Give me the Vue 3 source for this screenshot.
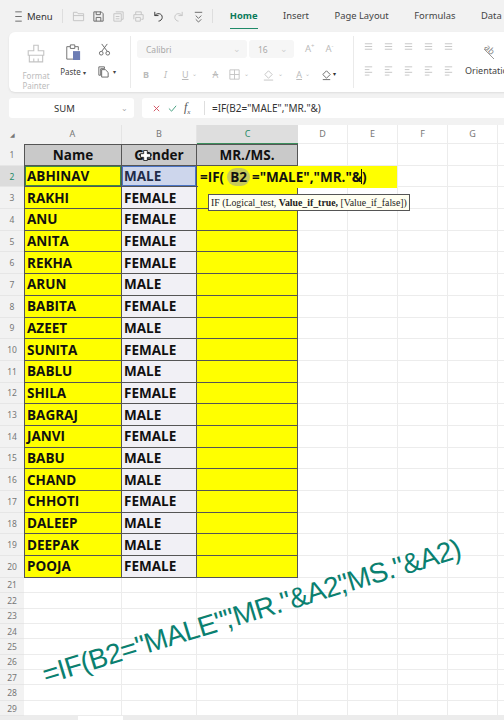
<script setup>
const people = [
  ['ABHINAV','MALE'],['RAKHI','FEMALE'],['ANU','FEMALE'],['ANITA','FEMALE'],['REKHA','FEMALE'],
  ['ARUN','MALE'],['BABITA','FEMALE'],['AZEET','MALE'],['SUNITA','FEMALE'],['BABLU','MALE'],
  ['SHILA','FEMALE'],['BAGRAJ','MALE'],['JANVI','FEMALE'],['BABU','MALE'],['CHAND','MALE'],
  ['CHHOTI','FEMALE'],['DALEEP','MALE'],['DEEPAK','MALE'],['POOJA','FEMALE']
]
const emptyRows = [21,22,23,24,25,26,27,28,29]
const emptyCols = ['D','E','F','G','']
const alignA = [0,1,2,3,4]
</script>

<template>
  <div class="app">
    <header class="topbar">
      <svg class="ic menu-ic" viewBox="0 0 9 14"><path d="M1 2h7M1 7h7M1 12h7"/></svg>
      <span class="menu">Menu</span>
      <i class="sep"></i>
      <svg class="ic faint" viewBox="0 0 14 14"><path d="M1.500 11.500v-9h4l1 1.500h6v7.500zM1.500 6h11"/></svg>
      <svg class="ic" viewBox="0 0 14 14"><path d="M2 2h8l2 2v8H2zM4.500 2v3h4.500V2M4.500 12V8h5v4"/></svg>
      <svg class="ic faint" viewBox="0 0 14 14"><path d="M4 2h8v8h-2M2 4h8v8H2zM4 7h4M4 9.500h4"/></svg>
      <svg class="ic faint" viewBox="0 0 14 14"><path d="M4 5V2h6v3M2 10V5h10v5h-2M4 8h5v4H4z"/></svg>
      <svg class="ic dark" viewBox="0 0 14 14"><path d="M3 2v4h4M3 6c2-3 8-3 8 2 0 2-2 4-4 4"/></svg>
      <svg class="ic faint" viewBox="0 0 14 14"><path d="M11 2v4H7M11 6C9 3 3 3 3 8c0 2 2 4 4 4"/></svg>
      <svg class="ic" viewBox="0 0 14 14"><path d="M3 2.500h8M4 6l3 3 3-3M4 10l3 3 3-3"/></svg>
      <i class="sep"></i>
      <nav class="tabs">
        <span class="tab active">Home</span>
        <span class="tab">Insert</span>
        <span class="tab">Page Layout</span>
        <span class="tab">Formulas</span>
        <span class="tab">Data</span>
      </nav>
    </header>

    <section class="ribbon">
      <div class="group clip">
        <div class="tool format">
          <svg class="ic big faint" viewBox="0 0 18 18"><path d="M7 2h4v5h5v4H2V7h5zM3 11v6h12v-6M7 17v-3M11 17v-3"/></svg>
          <span>Format<br>Painter</span>
        </div>
        <div class="tool paste">
          <svg class="paste-ic" viewBox="0 0 18 20"><path class="line" d="M2 18V4h4V2h5v2h4v4M6 4v2h5V4M2 18h7"/><rect x="9" y="9" width="8" height="10" fill="#6d7db4"/></svg>
          <span>Paste <small>▾</small></span>
        </div>
        <div class="tool pair">
          <svg class="ic cut" viewBox="0 0 14 14"><path d="M4 1l6 8M10 1L4 9"/><circle cx="3.500" cy="11" r="2"/><circle cx="10.500" cy="11" r="2"/></svg>
          <span class="copy">
            <svg class="ic" viewBox="0 0 14 14"><path d="M2 2h6v2h-4v7H2zM5 5h4l3 3v5H5z"/></svg>
            <small>▾</small>
          </span>
        </div>
      </div>
      <div class="group font">
        <div class="line-a">
          <span class="select calibri">Calibri<b>⌄</b></span>
          <span class="select size">16<b>⌄</b></span>
          <span class="fade a-big">A<sup>+</sup></span>
          <span class="fade a-big">A<sup>-</sup></span>
        </div>
        <div class="line-b">
          <span class="fade sty bold">B</span>
          <span class="fade sty ital">I</span>
          <span class="fade sty under">U</span>
          <small class="fade wide">⌄</small>
          <span class="fade sty strike">A</span>
          <svg class="ic faint" viewBox="0 0 14 14"><path d="M2 2h10v10H2zM7 2v10M2 7h10"/></svg>
          <small class="fade wide">⌄</small>
          <svg class="ic faint" viewBox="0 0 14 14"><path d="M3 7l4-4 4 4-4 4zM2 13h10"/></svg>
          <small class="fade wide">⌄</small>
          <span class="fade sty under">A</span>
          <small class="fade wide last">⌄</small>
          <svg class="ic" viewBox="0 0 14 14"><path d="M3 7l4-4 4 4-4 4zM3 12.500h8"/></svg>
          <small>▾</small>
        </div>
      </div>
      <div class="group align">
        <div class="line-c">
          <svg v-for="n in alignA" :key="n" class="ic faint small" viewBox="0 0 12 12"><path d="M2 3h8M2 6h8M2 9h8"/></svg>
        </div>
        <div class="line-c">
          <svg v-for="n in alignA" :key="n" class="ic faint small" viewBox="0 0 12 12"><path d="M2 2h8M2 5h5M2 8h8M2 11h5"/></svg>
        </div>
      </div>
      <div class="tool orient">
        <svg class="orient-ic" viewBox="0 0 20 20"><text x="3" y="13" transform="rotate(45 9 10)">ab</text><path d="M3 9l10 10"/></svg>
        <span>Orientation</span>
      </div>
    </section>

    <section class="formula">
      <div class="namebox"><span>SUM</span><b>⌄</b></div>
      <div class="fx">
        <svg class="mark" viewBox="0 0 10 10"><path stroke="#d0495a" d="M2 2l6 6M8 2L2 8"/></svg>
        <svg class="mark" viewBox="0 0 10 10"><path stroke="#3a9a78" d="M1 5l3 3 5-6"/></svg>
        <em>f<sub>x</sub></em>
        <i class="sep"></i>
        <span class="input">=IF(B2="MALE","MR."&amp;)</span>
      </div>
    </section>

    <main class="sheet">
      <div class="cols">
        <span class="corner">◢</span>
        <span class="col a">A</span>
        <span class="col b">B</span>
        <span class="col c">C</span>
        <span v-for="c in emptyCols" :key="c" class="col plain">{{ c }}</span>
      </div>

      <div class="row tall">
        <span class="rh">1</span>
        <span class="cell head a">Name</span>
        <span class="cell head b cursor-cell">Gender<svg class="cursor" viewBox="0 0 12 12"><path d="M4 0.500h4v3.500h3.500v4H8v3.500H4V8H0.500V4H4z"/></svg></span>
        <span class="cell head c">MR./MS.</span>
        <span v-for="c in emptyCols" :key="c" class="cell plain"></span>
      </div>

      <div v-for="(p, i) in people" :key="p[0]" class="row tall">
        <span class="rh" :class="{ current: i === 0 }">{{ i + 2 }}</span>
        <span class="cell name a">{{ p[0] }}</span>
        <span class="cell gender b" :class="{ picked: i === 0 }">{{ p[1] }}</span>
        <span class="cell yellow c"></span>
        <span v-for="c in emptyCols" :key="c" class="cell plain"></span>
      </div>

      <div v-for="r in emptyRows" :key="r" class="row short">
        <span class="rh">{{ r }}</span>
        <span class="cell plain a"></span>
        <span class="cell plain b"></span>
        <span class="cell plain c"></span>
        <span v-for="c in emptyCols" :key="c" class="cell plain"></span>
      </div>

      <div class="edit">=IF(<span class="ref">B2</span>="MALE","MR."&amp;<i class="caret"></i>)</div>
      <div class="tip"><span>IF (Logical_test, <b>Value_if_true,</b> [Value_if_false])</span></div>
      <div class="note">=IF(B2="MALE"<span class="tight">,</span>"MR."&amp;A2<span class="tight">,</span>"MS."&amp;A2)</div>
    </main>

    <footer class="sheetbar"><span class="sheettab"></span></footer>
  </div>
</template>

<style>
html, body { margin: 0; background: #f3f3f3; }
</style>

<style scoped>
.app { width: 504px; height: 720px; overflow: hidden; background: #f2f2f2; display: flex; flex-direction: column; font-family: "Noto Sans", "Open Sans", sans-serif; color: #333; }

.ic { width: 13px; height: 13px; fill: none; stroke: #666; stroke-width: 1; flex: none; }
.ic.faint { stroke: #c4c4c4; }
.ic.dark { stroke: #333; }
.ic.big { width: 20px; height: 20px; }
.ic.small { width: 11px; height: 11px; }
.sep { display: block; width: 1px; height: 14px; background: #dedede; flex: none; }

.topbar { height: 32px; flex: none; display: flex; align-items: center; padding-left: 14px; white-space: nowrap; overflow: hidden; }
.menu { font-size: 9.500px; margin-right: 9px; color: #333; }
.topbar .sep { margin-right: 9px; }
.topbar .ic { margin-right: 7px; }
.topbar .menu-ic { width: 9px; margin-right: 4px; }
.tabs { display: flex; margin-left: 8px; gap: 25.500px; font-size: 9.400px; color: #444; }
.tab { position: relative; line-height: 14px; }
.tab.active { color: #0a7a5a; font-weight: 700; }
.tab.active::after { content: ""; position: absolute; left: 0; right: 0; bottom: -6px; height: 1px; background: #1f8a68; }

.ribbon { height: 60px; flex: none; margin-left: 9px; width: 520px; box-sizing: border-box; background: #fff; border-radius: 6px 0 0 6px; display: flex; box-shadow: 0 1px 2px #ddd; white-space: nowrap; overflow: hidden; }
.group { display: flex; }
.clip { width: 122px; padding-left: 12px; box-sizing: border-box; border-right: 1px solid #eaeaea; margin: 4px 0; gap: 8px; flex: none; }
.tool { display: flex; flex-direction: column; align-items: center; font-size: 8px; color: #444; }
.format { color: #bbb; width: 30px; text-align: center; gap: 8px; line-height: 10px; padding-top: 7px; }
.paste { width: 28px; gap: 5px; padding-top: 7px; }
.paste-ic { width: 16px; height: 18px; fill: none; }
.paste-ic .line { stroke: #666; }
.paste small { font-size: 6px; }
.pair { gap: 9px; padding-top: 7px; margin-left: 2px; }
.copy { display: flex; align-items: center; gap: 3px; margin-right: -5px; }
.copy small { font-size: 6px; }

.font { width: 223px; flex-direction: column; padding: 4px 0 0 6px; gap: 6px; box-sizing: border-box; border-right: 1px solid #eaeaea; margin: 4px 0; flex: none; }
.line-a, .line-b { display: flex; align-items: center; }
.select { height: 18px; background: #f6f6f6; border-radius: 3px; font-size: 8.500px; color: #a8a8a8; display: flex; align-items: center; justify-content: space-between; padding: 0 6px 0 9px; box-sizing: border-box; }
.select b { font-weight: 400; color: #d0d0d0; line-height: 8px; }
.calibri { width: 110px; margin-right: 2px; }
.size { width: 45px; }
.fade { color: #bbb; }
.a-big { font-size: 9.500px; margin-left: 11px; }
.a-big sup { font-size: 6px; }
.line-b { font-size: 9px; padding-left: 6px; height: 20px; }
.line-b small { font-size: 6px; }
.line-b .wide { margin: 0 13px 0 3px; }
.line-b .wide.last { margin-right: 10px; }
.sty { margin-right: 15px; }
.sty.under { margin-right: 0; }
.strike { margin: 0 10px 0 3px; }
.bold { font-weight: 700; }
.ital { font-style: italic; }
.under { text-decoration: underline; }
.strike { text-decoration: line-through; }

.align { width: 106px; flex: none; flex-direction: column; padding: 9px 0 0 9px; gap: 13px; box-sizing: border-box; }
.line-c { display: flex; gap: 9px; }
.orient { padding-top: 8px; gap: 4px; font-size: 9px; align-items: flex-start; margin-left: 5px; }
.orient-ic { width: 20px; height: 20px; margin-left: 16px; fill: #888; stroke: #999; }
.orient-ic text { font-size: 9px; stroke: none; font-family: "Noto Sans", sans-serif; }

.formula { height: 20px; margin-top: 6px; flex: none; display: flex; padding-left: 9px; gap: 8px; }
.namebox { width: 125px; background: #fff; border-radius: 3px; display: flex; align-items: center; justify-content: space-between; padding: 0 6px 0 45px; box-sizing: border-box; font-size: 9.500px; }
.namebox b { font-weight: 400; color: #aaa; font-size: 8px; line-height: 6px; }
.fx { flex: 1; background: #fff; border-radius: 3px 0 0 3px; display: flex; align-items: center; padding-left: 10px; gap: 7px; font-size: 10px; white-space: nowrap; }
.mark { width: 9px; height: 9px; fill: none; stroke-width: 1; }
.fx em { font-family: "Liberation Serif", serif; font-size: 12px; width: 13px; color: #555; }
.fx sub { font-size: 7px; }

.sheet { position: relative; flex: 1; margin-top: 7px; background: #fff; overflow: hidden; }
.cols { height: 19px; display: flex; background: #f2f2f2; font-size: 9px; color: #777; }
.corner { width: 24px; flex: none; text-align: center; font-size: 6px; line-height: 20px; color: #777; }
.col { display: flex; flex: none; align-items: center; justify-content: center; box-sizing: border-box; padding-bottom: 2px; border-right: 1px solid #e4e4e4; }
.col.a { width: 98px; }
.col.b { width: 75px; }
.col.c { width: 101px; background: #dedede; color: #1f8a68; border-bottom: 1px solid #3b8f5c; border-right: 0; }
.col.plain, .cell.plain:nth-child(n+5) { width: 50px; }

.row { display: flex; }
.tall { height: 21.700px; }
.short { height: 15.400px; }
.rh { width: 24px; flex: none; background: #f2f2f2; display: flex; align-items: center; justify-content: center; font-size: 8.500px; color: #777; box-sizing: border-box; border-bottom: 1px solid #e6e6e6; }
.rh.current { background: #dcdcdc; color: #1f8a68; }

.cell { box-sizing: border-box; flex: none; display: flex; align-items: center; font-family: "Open Sans", sans-serif; font-weight: 700; font-size: 13.500px; color: #111; overflow: hidden; }
.cell.a { width: 98px; }
.cell.b { width: 75px; }
.cell.c { width: 101px; }
.plain { border-right: 1px solid #ececec; border-bottom: 1px solid #ececec; background: #fff; }
.head { background: #c9c9c9; justify-content: center; border: 1px solid #555; border-left-width: 0; font-size: 13.500px; }
.head.a { border-left: 1px solid #555; }
.name { background: #ff0; padding-left: 2px; border: 1px solid #555; border-width: 0 1px 1px 1px; }
.gender { background: #f1f0f5; padding-left: 2px; border: 1px solid #555; border-width: 0 1px 1px 0; }
.yellow { background: #ff0; border: 1px solid #555; border-width: 0 1px 1px 0; }
.picked { background: #cdd6ec; box-shadow: inset 0 0 0 1px #4a74c4; color: #222c4a; }
.row:nth-child(3) .name { box-shadow: inset 0 0 0 1px #3f8a40; }
.cursor-cell { position: relative; }
.cursor { position: absolute; left: 18px; top: 5px; width: 11px; height: 11px; fill: #fff; stroke: #222; stroke-width: 1; }

.edit { position: absolute; left: 198px; top: 40.500px; width: 199px; height: 22px; padding-left: 2px; box-sizing: border-box; background: #ff0; display: flex; align-items: center; font-family: "Open Sans", sans-serif; font-weight: 700; font-size: 13.500px; color: #111; white-space: pre; }
.ref { background: #c7c95a; border-radius: 9px; padding: 0 3px; margin: 0 2px 0 3px; }
.caret { display: block; width: 1px; height: 15px; background: #111; margin-left: -1px; }
.tip { position: absolute; left: 208px; top: 69px; height: 17px; padding: 0 2px; box-sizing: border-box; background: #fffff0; border: 1px solid #555; display: flex; align-items: center; white-space: pre; font-family: "Liberation Serif", serif; font-size: 9.800px; color: #222; }
.note { position: absolute; left: 48px; top: 534px; font-family: "Liberation Sans", sans-serif; font-size: 28px; letter-spacing: -.6px; color: #0a8070; white-space: nowrap; transform: rotate(-17deg); transform-origin: 0 100%; }
.tight { margin-right: -7px; }

.sheetbar { height: 4px; flex: none; background: #ececec; padding-left: 78px; margin-top: -4px; position: relative; }
.sheettab { display: block; width: 45px; height: 4px; background: #fff; }
</style>
